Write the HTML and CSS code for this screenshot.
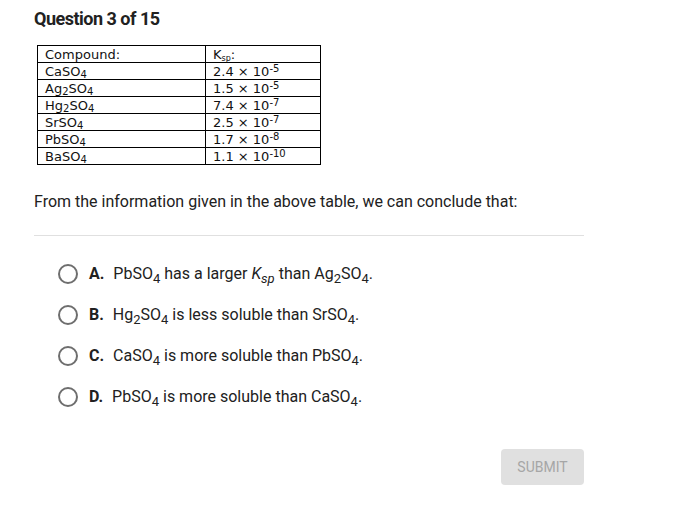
FILE: index.html
```html
<!doctype html>
<html lang="en">
<head>
    <meta charset="UTF-8">
    <title>Question 3 of 15</title>
    <link rel="stylesheet" href="styles.css">
</head>
<body>
<div class="quiz">
    <h1 class="title">Question 3 of 15</h1>
    <table class="kspTable">
        <tr><td>Compound:</td><td>K<sub class="sm">sp</sub>:</td></tr>
        <tr><td>CaSO<sub>4</sub></td><td>2.4 &times; 10<sup>-5</sup></td></tr>
        <tr><td>Ag<sub>2</sub>SO<sub>4</sub></td><td>1.5 &times; 10<sup>-5</sup></td></tr>
        <tr><td>Hg<sub>2</sub>SO<sub>4</sub></td><td>7.4 &times; 10<sup>-7</sup></td></tr>
        <tr><td>SrSO<sub>4</sub></td><td>2.5 &times; 10<sup>-7</sup></td></tr>
        <tr><td>PbSO<sub>4</sub></td><td>1.7 &times; 10<sup>-8</sup></td></tr>
        <tr><td>BaSO<sub>4</sub></td><td>1.1 &times; 10<sup>-10</sup></td></tr>
    </table>
    <p class="prompt">From the information given in the above table, we can conclude that:</p>
    <ul class="answers">
        <li><span class="radio"></span><span class="label"><b>A.</b> PbSO<sub>4</sub> has a larger <i>K<sub>sp</sub></i> than Ag<sub>2</sub>SO<sub>4</sub>.</span></li>
        <li><span class="radio"></span><span class="label"><b>B.</b> Hg<sub>2</sub>SO<sub>4</sub> is less soluble than SrSO<sub>4</sub>.</span></li>
        <li><span class="radio"></span><span class="label"><b>C.</b> CaSO<sub>4</sub> is more soluble than PbSO<sub>4</sub>.</span></li>
        <li><span class="radio"></span><span class="label"><b>D.</b> PbSO<sub>4</sub> is more soluble than CaSO<sub>4</sub>.</span></li>
    </ul>
    <div class="actions">
        <button class="submitBtn" disabled>Submit</button>
    </div>
</div>
</body>
</html>
```

FILE: styles.css
```css
* {
    padding: 0;
    margin: 0;
    list-style: none;
}

body {
    font-family: Roboto, "Liberation Sans", sans-serif;
    color: #212121;
    background: #fff;
}

.quiz {
    width: 550px;
    padding: 8px 0 0 34px;
}

.title {
    font-size: 18px;
    font-weight: bold;
    line-height: 22px;
    letter-spacing: -0.5px;
}

.kspTable {
    margin: 15px 0 0 3px;
    border-collapse: collapse;
    font-family: "DejaVu Sans", Verdana, sans-serif;
    font-size: 13px;
    color: #111;
}

.kspTable td {
    border: 1px solid #000;
    height: 16px;
    padding: 0 7px;
    line-height: 15px;
    vertical-align: middle;
}

.kspTable td:first-child {
    width: 153px;
}

.kspTable td:last-child {
    width: 100px;
}

.kspTable sub,
.kspTable sup {
    font-size: 10px;
    line-height: 0;
}

.kspTable sub {
    vertical-align: -2px;
}

.kspTable sup {
    vertical-align: 4px;
}

.kspTable sub.sm {
    font-size: 8px;
}

.prompt {
    margin-top: 27px;
    font-size: 16px;
    line-height: 20px;
}

.answers {
    margin-top: 23px;
    padding-top: 28px;
    border-top: 1px solid #e0e0e0;
}

.answers li {
    display: flex;
    align-items: center;
    height: 20px;
    margin-bottom: 21px;
    padding-left: 24px;
    font-size: 16px;
    line-height: 20px;
}

.answers .label {
    white-space: nowrap;
    margin-left: 1px;
}

.answers b {
    font-weight: bold;
    margin-right: 5px;
}

.answers sub {
    font-size: 13px;
    line-height: 0;
    vertical-align: -4px;
}

.radio {
    width: 16px;
    height: 16px;
    border: 2px solid #6e6e6e;
    border-radius: 50%;
    margin-right: 10px;
    flex: none;
}

.actions {
    display: flex;
    justify-content: flex-end;
    margin-top: 42px;
}

.submitBtn {
    width: 83px;
    height: 36px;
    border: none;
    border-radius: 4px;
    background: #e0e0e0;
    color: #a6a6a6;
    font-family: Roboto, "Liberation Sans", sans-serif;
    font-size: 14px;
    text-transform: uppercase;
}
```
